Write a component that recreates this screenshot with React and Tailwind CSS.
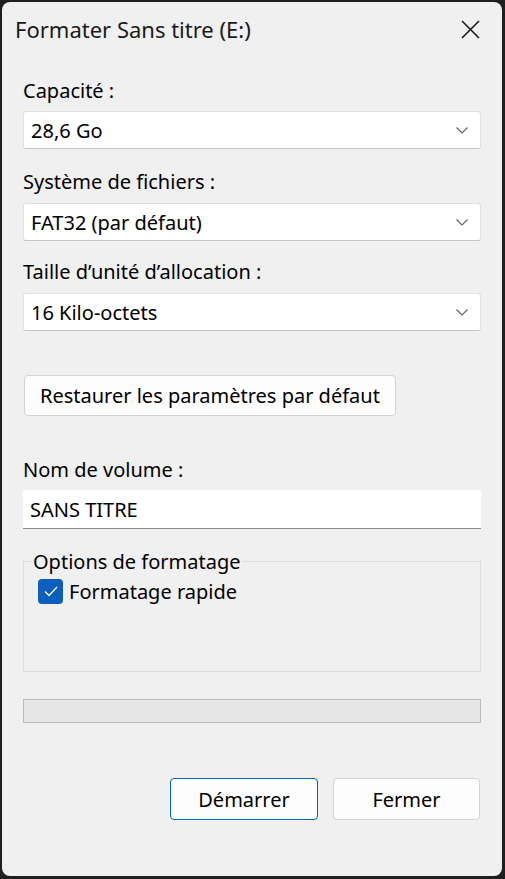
import React from "react";

const Chevron = () => (
  <svg width="12" height="7" viewBox="0 0 12 7" className="shrink-0">
    <path d="M0.5 0.5 L6 6 L11.5 0.5" fill="none" stroke="#5f5f5f" strokeWidth="1.1" />
  </svg>
);

const Select = ({ value }) => (
  <div className="h-[38px] w-full bg-white border border-[#e0e0e0] border-b-[#c4c4c4] rounded-[3px] flex items-center justify-between pl-[7px] pr-[12px]">
    <span>{value}</span>
    <Chevron />
  </div>
);

const App = () => {
  return (
    <div className="w-[505px] h-[879px] bg-[#1f1f1f] pt-[2px] pl-[2px] pr-[3px] pb-[3px]" style={{ fontFamily: '"Noto Sans", "Open Sans", sans-serif' }}>
      <div className="h-full w-full bg-[#f0f0f0] rounded-[8px] text-[#000] text-[20px] leading-[19px] flex flex-col">
        {/* title bar */}
        <div className="h-[55px] flex items-center justify-between pl-[13px] pr-[22px]">
          <span className="text-[22px] text-[#1a1a1a]">Formater Sans titre (E:)</span>
          <svg width="19" height="19" viewBox="0 0 19 19">
            <path d="M1 1 L18 18 M18 1 L1 18" stroke="#1a1a1a" strokeWidth="1.6" />
          </svg>
        </div>

        <div className="px-[21px] flex flex-col">
          <div className="mt-[24px] mb-[11px]">Capacité :</div>
          <Select value="28,6 Go" />

          <div className="mt-[23px] mb-[12px]">Système de fichiers :</div>
          <Select value="FAT32 (par défaut)" />

          <div className="mt-[21px] mb-[12px]">Taille d’unité d’allocation :</div>
          <Select value="16 Kilo-octets" />

          <div className="mt-[44px]">
            <button className="h-[41px] px-[15px] bg-[#fdfdfd] border border-[#d3d3d3] rounded-[4px] ml-[1px]">
              Restaurer les paramètres par défaut
            </button>
          </div>

          <div className="mt-[44px] mb-[11px]">Nom de volume :</div>
          <div className="h-[39px] bg-white border-b border-[#8a8a8a] rounded-t-[2px] flex items-center px-[7px]">
            SANS TITRE
          </div>

          {/* group box */}
          <div className="mt-[32px] h-[111px] border border-[#dcdcdc] relative px-[14px] pt-[17px]">
            <span className="absolute left-[8px] top-[-10px] bg-[#f0f0f0] px-[1px]">Options de formatage</span>
            <div className="flex items-center gap-[6px]">
              <div className="w-[25px] h-[25px] rounded-[4px] bg-[#0a5fc0] flex items-center justify-center">
                <svg width="14" height="11" viewBox="0 0 14 11">
                  <path d="M1 5.5 L5 9.5 L13 1" fill="none" stroke="#fff" strokeWidth="1.3" />
                </svg>
              </div>
              <span>Formatage rapide</span>
            </div>
          </div>

          {/* progress */}
          <div className="mt-[27px] h-[24px] bg-[#e6e6e6] border border-[#bcbcbc]"></div>

          {/* buttons */}
          <div className="mt-[55px] flex justify-end gap-[15px] pr-[1px]">
            <button className="w-[148px] h-[42px] bg-[#fdfdfd] border border-[#0067c0] rounded-[4px]">Démarrer</button>
            <button className="w-[147px] h-[42px] bg-[#fdfdfd] border border-[#d3d3d3] rounded-[4px]">Fermer</button>
          </div>
        </div>
      </div>
    </div>
  );
};

export default App;
